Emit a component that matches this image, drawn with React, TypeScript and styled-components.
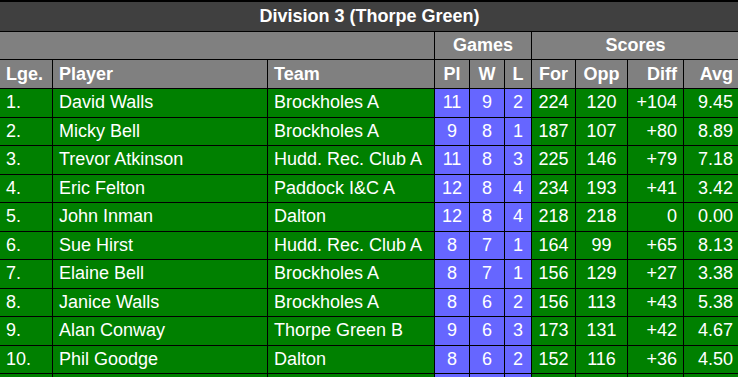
import { createGlobalStyle, styled } from 'styled-components'

const GlobalStyle = createGlobalStyle`
    body {
        margin: 0;
        background: #ffffff;
        overflow: hidden;
        font-family: 'Liberation Sans', Arial, sans-serif;
    }
`

type Align = 'left' | 'center' | 'right'

const players = [
    ['1.', 'David Walls', 'Brockholes A', 11, 9, 2, 224, 120, '+104', '9.45'],
    ['2.', 'Micky Bell', 'Brockholes A', 9, 8, 1, 187, 107, '+80', '8.89'],
    ['3.', 'Trevor Atkinson', 'Hudd. Rec. Club A', 11, 8, 3, 225, 146, '+79', '7.18'],
    ['4.', 'Eric Felton', 'Paddock I&C A', 12, 8, 4, 234, 193, '+41', '3.42'],
    ['5.', 'John Inman', 'Dalton', 12, 8, 4, 218, 218, '0', '0.00'],
    ['6.', 'Sue Hirst', 'Hudd. Rec. Club A', 8, 7, 1, 164, 99, '+65', '8.13'],
    ['7.', 'Elaine Bell', 'Brockholes A', 8, 7, 1, 156, 129, '+27', '3.38'],
    ['8.', 'Janice Walls', 'Brockholes A', 8, 6, 2, 156, 113, '+43', '5.38'],
    ['9.', 'Alan Conway', 'Thorpe Green B', 9, 6, 3, 173, 131, '+42', '4.67'],
    ['10.', 'Phil Goodge', 'Dalton', 8, 6, 2, 152, 116, '+36', '4.50'],
]

// widths of each column, border centre to border centre
const colWidths = [53, 215, 167, 35, 35, 27, 44, 52, 56, 56]

// how each column lines up
const colAlign: Align[] = ['left', 'left', 'left', 'center', 'center', 'center', 'center', 'center', 'right', 'right']
const headings = ['Lge.', 'Player', 'Team', 'Pl', 'W', 'L', 'For', 'Opp', 'Diff', 'Avg']

const isGames = (i: number) => i >= 3 && i <= 5

function App() {
    return (
        <>
            <GlobalStyle />
            <Table>
                <colgroup>
                    {colWidths.map((w, i) => (
                        <col key={i} style={{ width: `${w}px` }} />
                    ))}
                </colgroup>
                <thead>
                    <tr>
                        <TitleCell colSpan={10}>Division 3 (Thorpe Green)</TitleCell>
                    </tr>
                    <GroupRow>
                        <HeadCell colSpan={3} $align="left"></HeadCell>
                        <HeadCell colSpan={3} $align="center">Games</HeadCell>
                        <HeadCell colSpan={4} $align="center">Scores</HeadCell>
                    </GroupRow>
                    <HeadRow>
                        {headings.map((h, i) => (
                            <HeadCell key={h} $align={colAlign[i]}>
                                {h}
                            </HeadCell>
                        ))}
                    </HeadRow>
                </thead>
                <tbody>
                    {players.map((row) => (
                        <DataRow key={row[0]}>
                            {row.map((value, i) => (
                                <DataCell key={i} $align={colAlign[i]} $games={isGames(i)}>
                                    {value}
                                </DataCell>
                            ))}
                        </DataRow>
                    ))}
                    {/* next row starts just at the bottom edge */}
                    <DataRow>
                        {headings.map((h, i) => (
                            <DataCell key={h} $align={colAlign[i]} $games={isGames(i)} />
                        ))}
                    </DataRow>
                </tbody>
            </Table>
        </>
    )
}

export default App

const Table = styled.table`
    width: 740px;
    margin-left: -1px;
    table-layout: fixed;
    border-collapse: collapse;
    border-top: 2px solid #000000;
    color: #ffffff;
    font-size: 18px;
`

const Cell = styled.td<{ $align: Align }>`
    border: 1px solid #000000;
    padding: 0 6px;
    text-align: ${({ $align }) => $align};
    white-space: nowrap;
    overflow: hidden;
`

const TitleCell = styled.th`
    background-color: #404040;
    border: 1px solid #000000;
    border-top: 2px solid #000000;
    height: 29px;
    padding: 0;
    font-weight: bold;
    text-align: center;
`

const GroupRow = styled.tr`
    height: 28px;
    background-color: #808080;
`

const HeadRow = styled.tr`
    height: 29px;
    background-color: #808080;
`

const HeadCell = styled(Cell).attrs({ as: 'th' })`
    font-weight: bold;
`

const DataRow = styled.tr`
    height: 28.5px;
    background-color: #008000;
`

const DataCell = styled(Cell)<{ $games: boolean }>`
    background-color: ${({ $games }) => ($games ? '#6666ff' : 'transparent')};
`
